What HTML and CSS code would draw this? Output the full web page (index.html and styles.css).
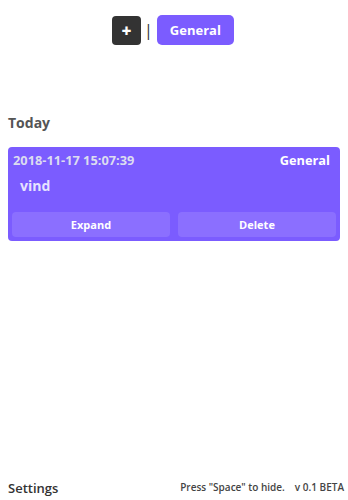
FILE: index.html
```html
<!DOCTYPE html>
<html>
<head>
<meta charset="utf-8">
<link rel="stylesheet" href="styles.css">
</head>
<body>
<div class="app">
  <header class="topbar">
    <button class="add">+</button>
    <span class="sep">|</span>
    <button class="tag">General</button>
  </header>
  <main class="content">
    <h2 class="day">Today</h2>
    <div class="card">
      <div class="card-head">
        <span class="date">2018-11-17 15:07:39</span>
        <span class="cat">General</span>
      </div>
      <div class="card-text">vind</div>
      <div class="card-actions">
        <button class="act">Expand</button>
        <button class="act">Delete</button>
      </div>
    </div>
  </main>
  <footer class="footer">
    <span class="settings">Settings</span>
    <span class="hint">Press "Space" to hide.<span class="ver">v 0.1 BETA</span></span>
  </footer>
</div>
</body>
</html>
```
FILE: styles.css
```css
* { box-sizing: border-box; }
html, body { margin: 0; padding: 0; background: #fff; }
body { font-family: "Open Sans", "Liberation Sans", sans-serif; }
.app { width: 348px; height: 500px; display: flex; flex-direction: column; padding: 0 8px; }
.topbar { display: flex; justify-content: center; align-items: center; padding-top: 15px; height: 45px; margin-left: -2px; }
button { font-family: inherit; border: none; cursor: pointer; }
.add { width: 29px; height: 29px; background: #333; color: #fff; border-radius: 4px; font-size: 17px; font-weight: 800; line-height: 29px; padding: 0; }
.sep { color: #333; font-size: 16px; margin: 0 4px 0 3px; line-height: 1; }
.tag { height: 30px; width: 77px; background: #7b5cff; color: #fff; border-radius: 5px; font-size: 13px; font-weight: 700; padding: 0; }
.content { flex: 1; }
.day { margin: 69px 0 0; font-size: 14px; font-weight: 700; color: #555; line-height: 18px; }
.card { margin-top: 15px; background: #7b5cff; border-radius: 4px; padding: 4px 4px 4px; }
.card-head { display: flex; justify-content: space-between; padding: 0 6px 0 1px; font-size: 12.8px; font-weight: 700; line-height: 18px; }
.date { color: #dcdcf0; }
.cat { color: #fff; }
.card-text { color: #e6e3ff; font-size: 14px; font-weight: 700; padding: 8px 8px 0; line-height: 18px; height: 43px; }
.card-actions { display: flex; gap: 8px; }
.act { flex: 1; height: 25px; background: #8b6fff; color: #fff; border-radius: 4px; font-size: 11px; font-weight: 700; padding: 0; }
.footer { display: flex; justify-content: space-between; align-items: flex-end; padding-bottom: 3px; }
.settings { font-size: 13px; font-weight: 600; color: #333; }
.hint { font-size: 10px; font-weight: 600; color: #444; padding-bottom: 3px; margin-right: -4px; }
.ver { margin-left: 10px; }
```
